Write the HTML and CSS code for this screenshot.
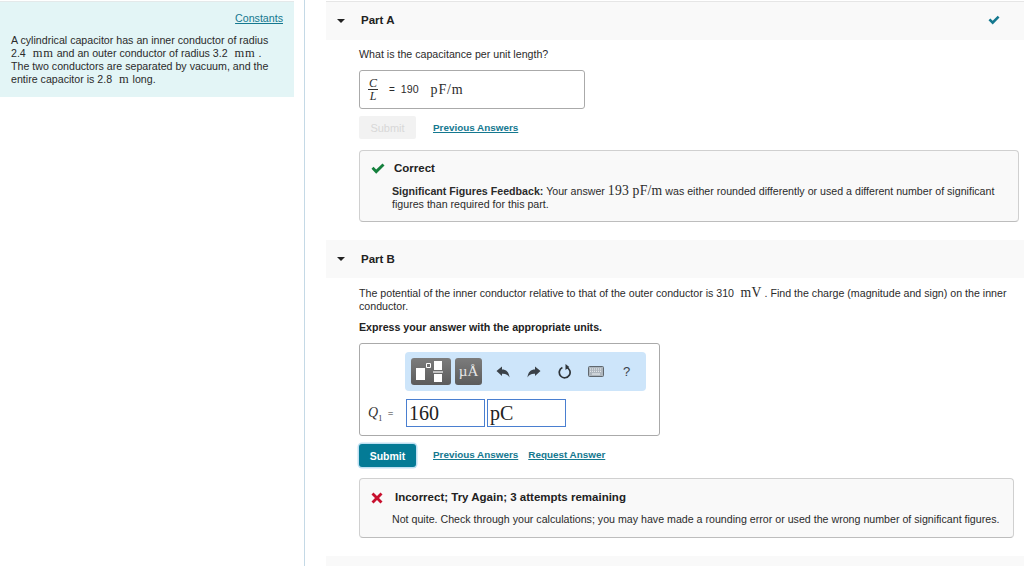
FILE: index.html
```html
<!DOCTYPE html>
<html lang="en">
<head>
<meta charset="utf-8">
<title>Capacitor</title>
<link rel="stylesheet" href="styles.css">
</head>
<body>
<div class="page">
  <aside class="side">
    <div class="intro">
      <div class="const-row"><a class="link-plain">Constants</a></div>
      <p class="intro-text">A cylindrical capacitor has an inner conductor of radius 2.4 <span class="m">&nbsp;mm</span> and an outer conductor of radius 3.2 <span class="m">&nbsp;mm</span> . The two conductors are separated by vacuum, and the entire capacitor is 2.8 <span class="m">&nbsp;m</span> long.</p>
    </div>
  </aside>
  <main class="main">
    <section class="part part-a">
      <header class="part-head">
        <span class="caret"></span><h2>Part A</h2>
        <svg class="head-check" viewBox="0 0 12 10" width="12" height="10"><path d="M0.500 5.200l1.800-1.800 2.400 2.400L9.700 0.800l1.800 1.800-6.800 6.800z" fill="#14788f"/></svg>
      </header>
      <div class="part-body">
        <p class="q q-a">What is the capacitance per unit length?</p>
        <div class="answer-a">
          <span class="frac"><i>C</i><i>L</i></span>
          <span class="eq">=</span>
          <span>190</span>
          <span class="unit">pF/m</span>
        </div>
        <div class="actions actions-a">
          <button class="btn btn-off">Submit</button>
          <a class="link">Previous Answers</a>
        </div>
        <div class="feedback fb-correct">
          <div class="fb-title">
            <svg viewBox="0 0 14 11" width="14" height="11"><path d="M0.500 5.800l2-2 2.700 2.700L11.500 0.500l2 2-8.300 8.200z" fill="#15803d"/></svg>
            <strong>Correct</strong>
          </div>
          <p class="fb-text"><strong>Significant Figures Feedback:</strong> Your answer <span class="m big">193 pF/m</span> was either rounded differently or used a different number of significant figures than required for this part.</p>
        </div>
      </div>
    </section>
    <section class="part part-b">
      <header class="part-head">
        <span class="caret"></span><h2>Part B</h2>
      </header>
      <div class="part-body">
        <p class="q q-b">The potential of the inner conductor relative to that of the outer conductor is 310 <span class="m big">&nbsp;mV</span> . Find the charge (magnitude and sign) on the inner conductor.</p>
        <p class="q express"><strong>Express your answer with the appropriate units.</strong></p>
        <div class="answer-b">
          <div class="toolbar">
            <span class="tool tool-wide">
              <svg viewBox="0 0 40 27" width="40" height="27"><path d="M5 10h9v12H5zM23 3h8v9h-8zM23 16h8v8h-8z" fill="#fff"/><path d="M15.500 5.500h4v4h-4z" fill="none" stroke="#fff"/><path d="M22 14h10" stroke="#fff" stroke-width="1.200"/></svg>
            </span>
            <span class="tool tool-unit">µÅ</span>
            <svg class="ti" viewBox="0 0 14 12" width="14" height="12"><path d="M0.500 5L6 0.500v3c4.200 0 7 2.500 7.500 8-1.500-3-3.800-4-7.500-3.800V10z" fill="#3a4148"/></svg>
            <svg class="ti" viewBox="0 0 14 12" width="14" height="12"><path d="M13.500 5L8 0.500v3c-4.200 0-7 2.500-7.500 8 1.500-3 3.800-4 7.500-3.800V10z" fill="#3a4148"/></svg>
            <svg class="ti" viewBox="0 0 14 15" width="14" height="15"><path d="M8.200 3.200a5.400 5.400 0 1 1-3.800 0.300" fill="none" stroke="#2d3338" stroke-width="1.700"/><path d="M7.500 0v6l3.800-3z" fill="#2d3338"/></svg>
            <svg class="ti ti-kb" viewBox="0 0 16 11" width="16" height="11"><rect x="0.500" y="0.500" width="15" height="10" rx="1" fill="#aeb6bd" stroke="#5f676e"/><path d="M2 3h12M2 5.300h12" stroke="#eef1f3" stroke-dasharray="1 1"/><path d="M4 8h8" stroke="#eef1f3"/></svg>
            <span class="help">?</span>
          </div>
          <div class="input-row">
            <span class="q1"><i>Q</i><sub>1</sub> <span class="eq">=</span></span>
            <span class="input">160</span>
            <span class="input input-unit">pC</span>
          </div>
        </div>
        <div class="actions actions-b">
          <button class="btn btn-on">Submit</button>
          <a class="link">Previous Answers</a>
          <a class="link">Request Answer</a>
        </div>
        <div class="feedback fb-wrong">
          <div class="fb-title">
            <svg viewBox="0 0 12 12" width="12" height="12"><path d="M0.500 2.500l2-2L6 4l3.500-3.500 2 2L8 6l3.500 3.500-2 2L6 8l-3.500 3.500-2-2L4 6z" fill="#c8102e"/></svg>
            <strong>Incorrect; Try Again; 3 attempts remaining</strong>
          </div>
          <p class="fb-text">Not quite. Check through your calculations; you may have made a rounding error or used the wrong number of significant figures.</p>
        </div>
      </div>
    </section>
    <div class="next-head"></div>
  </main>
</div>
</body>
</html>
```
FILE: styles.css
```css
* { box-sizing: border-box; }
html, body { margin: 0; padding: 0; height: 566px; overflow: hidden; background: #fff; }
body { font-family: "Liberation Sans", Arial, sans-serif; font-size: 10.650px; line-height: 13px; color: #2b2b2b; }
p, h2 { margin: 0; }
.page { display: flex; height: 566px; padding-top: 1px; }
.side { width: 305px; flex: none; border-right: 1px solid #c4d9e6; margin-top: -1px; padding-top: 1px; }
.intro { width: 294px; height: 96px; background: #e3f5f6; border-top: 1px solid #e4e9ea; padding: 10px 11px 0 11px; }
.const-row { text-align: right; height: 22px; }
.link-plain { color: #14788f; text-decoration: underline; }
.intro-text { width: 262px; }
.m { font-family: "Liberation Serif", serif; font-size: 12.500px; line-height: 1; letter-spacing: 0.800px; }
.m.big { font-size: 13.700px; letter-spacing: 0.200px; }
.main { flex: 1; min-width: 0; margin-left: 21px; }
.part-head { position: relative; display: flex; align-items: center; height: 38px; background: #f9f9f9; padding: 0 0 1px 11px; }
.part-b .part-head { padding-bottom: 0; }
.part-a { border-top: 1px solid #e6e6e6; }
.caret { width: 0; height: 0; border-left: 4px solid transparent; border-right: 4px solid transparent; border-top: 4px solid #222; }
h2 { font-size: 11.500px; font-weight: 700; margin-left: 16px; color: #222; }
.head-check { position: absolute; right: 24px; top: 13px; }
.part-body { padding-left: 33px; }
.q-a { padding-top: 8px; }
.answer-a { display: flex; align-items: center; margin-top: 9px; width: 226px; height: 39px; border: 1px solid #aaa; border-radius: 3px; padding-left: 8px; }
.frac { display: flex; flex-direction: column; align-items: center; width: 10px; font-family: "Liberation Serif", serif; font-size: 12px; line-height: 12px; }
.frac i:first-child { border-bottom: 1px solid #333; width: 100%; text-align: center; }
.eq { font-size: 10px; margin: 0 6px 0 11px; }
.unit { font-family: "Liberation Serif", serif; font-size: 14px; letter-spacing: 0.800px; margin-left: 12px; }
.actions { display: flex; align-items: center; }
.actions-a { margin-top: 7px; height: 23px; }
.actions-b { margin-top: 8px; height: 23px; }
.btn { width: 57px; height: 23px; border: 0; border-radius: 2px; font: 700 10.500px "Liberation Sans", Arial, sans-serif; padding: 0; }
.btn-off { background: #f2f2f2; color: #d8d8d8; font-weight: 400; font-size: 11px; }
.btn-on { background: #047b96; color: #fff; border-radius: 3px; box-shadow: 0 0 0 1.500px #bfe0f2; }
.link { margin-left: 17px; color: #14788f; font-weight: 700; font-size: 9.900px; text-decoration: underline; }
.link + .link { margin-left: 10px; }
.actions-b .link { margin-bottom: 2px; }
.feedback { background: #f9f9f9; border: 1px solid #d0d0d0; border-bottom: 1.500px solid #bdbdbd; border-radius: 4px; }
.fb-correct { margin-top: 11px; width: 660px; height: 72px; padding: 11px 0 0 11px; }
.fb-wrong { margin-top: 11px; width: 655px; height: 60px; padding: 12px 0 0 11px; }
.fb-title { display: flex; align-items: center; gap: 9px; height: 13px; color: #222; font-size: 11.500px; }
.fb-wrong .fb-title { gap: 12px; }
.fb-text { padding-left: 21px; color: #2b2b2b; }
.fb-correct .fb-text { margin-top: 9px; width: 632px; }
.fb-wrong .fb-text { margin-top: 9px; white-space: nowrap; }
.part-b { margin-top: 18px; }
.q-b { padding-top: 8px; width: 660px; }
.express { margin-top: 8px; color: #222; }
.answer-b { margin-top: 9px; width: 301px; height: 93px; border: 1px solid #aaa; border-radius: 3px; padding: 8px 0 0 8px; }
.toolbar { display: flex; align-items: center; margin-left: 37px; width: 241px; height: 39px; background: #cde5fa; border-radius: 4px; padding-left: 6px; }
.tool { display: flex; align-items: center; justify-content: center; height: 27px; background: linear-gradient(#7c7c7c, #5c5c5c); border-radius: 3px; color: #e6e6e6; }
.tool-wide { width: 40px; }
.tool-unit { width: 27px; margin-left: 4px; font: 15px "Liberation Serif", serif; }
.ti { flex: none; margin-left: 17px; }
.tool-unit + .ti { margin-left: 14px; }
.ti-kb { margin-left: 16px; }
.help { margin-left: 19px; font-size: 13px; color: #3a4148; }
.input-row { display: flex; align-items: center; margin-top: 8px; }
.q1 { width: 38px; font-family: "Liberation Serif", serif; font-size: 14px; color: #333; white-space: nowrap; }
.q1 sub { font-size: 8px; line-height: 0; }
.q1 .eq { margin: 0 0 0 2px; }
.input { display: block; width: 79px; height: 28px; border: 1px solid #4a7fd0; font: 20px/26px "Liberation Serif", serif; color: #222; padding-left: 2px; }
.input-unit { margin-left: 2px; }
.next-head { margin-top: 18px; height: 20px; background: #f9f9f9; }
```
